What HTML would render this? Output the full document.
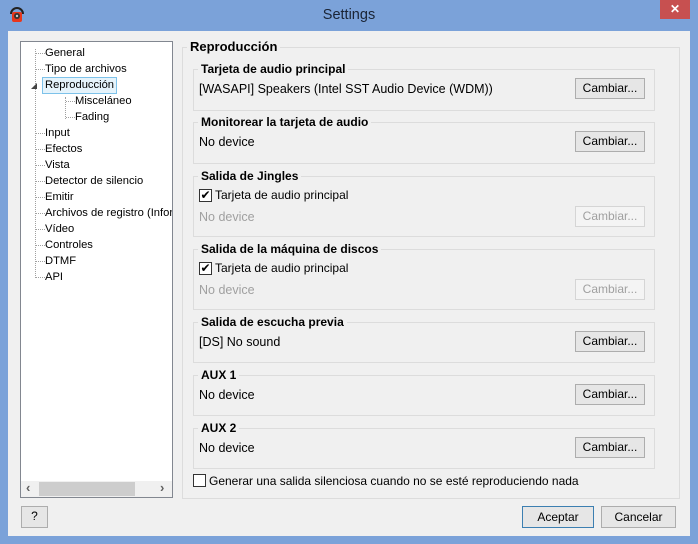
<!DOCTYPE html>
<html><head><meta charset="utf-8"><style>
*{box-sizing:border-box;margin:0;padding:0}
body{width:698px;height:544px;background:#7ba2d9;font-family:"Liberation Sans",Arial,sans-serif;font-size:12px;color:#000;position:relative;overflow:hidden}
.a{position:absolute}
.title{left:0;top:7px;width:698px;text-align:center;font-size:14.5px;color:#1a2435}
.close{left:660px;top:0px;width:30px;height:19px;background:#c75050;color:#fff;text-align:center;font-size:12px;line-height:19px;font-weight:bold}
.client{left:8px;top:31px;width:682px;height:505px;background:#f0f0f0}
.tree{left:20px;top:41px;width:153px;height:457px;background:#fff;border:1px solid #828790;font-size:11.2px}
.ti{position:absolute;white-space:nowrap;line-height:14px}
.hd{position:absolute;border-top:1px dotted #a0a0a0;width:9px}
.grp{position:absolute;border:1px solid #dcdcdc}
.gt{position:absolute;background:#f0f0f0;font-weight:bold;padding:0 3px;line-height:14px}
.btn{position:absolute;width:70px;height:21px;border:1px solid #adadad;background:#e6e6e6;text-align:center;line-height:19px}
.dis{color:#a0a0a0;border-color:#d5d5d5;background:#f4f4f4}
.txt{position:absolute;white-space:nowrap;font-size:12.5px}
.cb{position:absolute;width:13px;height:13px;border:1px solid #333;background:#fff;font-size:12px;line-height:11px;text-align:center}
</style></head><body>
<div class="a" style="left:9px;top:5px;width:16px;height:18px;">
<svg width="16" height="18"><path d="M2 9 A6 6 0 0 1 14 9" stroke="#222" stroke-width="2" fill="none"/><rect x="3" y="7" width="10" height="10" rx="2" fill="#e8361c"/><circle cx="8" cy="11" r="3" fill="#333"/><circle cx="8" cy="11" r="1.2" fill="#ccc"/></svg></div>
<div class="a title">Settings</div>
<div class="a close">✕</div>
<div class="a client"></div>
<div class="a tree">
<div class="a" style="left:14px;top:7px;height:229px;border-left:1px dotted #a0a0a0"></div>
<div class="a" style="left:44px;top:55px;height:22px;border-left:1px dotted #a0a0a0"></div>
<div class="hd" style="left:15px;top:11px"></div><div class="ti" style="left:24px;top:4px">General</div>
<div class="hd" style="left:15px;top:27px"></div><div class="ti" style="left:24px;top:20px">Tipo de archivos</div>
<div class="a" style="left:10px;top:41px;width:0;height:0;border-left:6px solid transparent;border-bottom:6px solid #444"></div>
<div class="ti" style="left:21px;top:35px;border:1px solid #7dc2ea;background:#e5f3fb;padding:0 2px;height:17px;line-height:15px">Reproducción</div>
<div class="hd" style="left:45px;top:59px"></div><div class="ti" style="left:54px;top:52px">Misceláneo</div>
<div class="hd" style="left:45px;top:75px"></div><div class="ti" style="left:54px;top:68px">Fading</div>
<div class="hd" style="left:15px;top:91px"></div><div class="ti" style="left:24px;top:84px">Input</div>
<div class="hd" style="left:15px;top:107px"></div><div class="ti" style="left:24px;top:100px">Efectos</div>
<div class="hd" style="left:15px;top:123px"></div><div class="ti" style="left:24px;top:116px">Vista</div>
<div class="hd" style="left:15px;top:139px"></div><div class="ti" style="left:24px;top:132px">Detector de silencio</div>
<div class="hd" style="left:15px;top:155px"></div><div class="ti" style="left:24px;top:148px">Emitir</div>
<div class="hd" style="left:15px;top:171px"></div><div class="ti" style="left:24px;top:164px;width:127px;overflow:hidden">Archivos de registro (Informes)</div>
<div class="hd" style="left:15px;top:187px"></div><div class="ti" style="left:24px;top:180px">Vídeo</div>
<div class="hd" style="left:15px;top:203px"></div><div class="ti" style="left:24px;top:196px">Controles</div>
<div class="hd" style="left:15px;top:219px"></div><div class="ti" style="left:24px;top:212px">DTMF</div>
<div class="hd" style="left:15px;top:235px"></div><div class="ti" style="left:24px;top:228px">API</div>
<div class="a" style="left:0;top:439px;width:151px;height:16px;background:#f0f0f0"></div>
<div class="a" style="left:18px;top:440px;width:96px;height:14px;background:#cdcdcd"></div>
<div class="a" style="left:5px;top:438px;color:#606060;font-weight:bold;font-size:13px">‹</div>
<div class="a" style="left:139px;top:438px;color:#606060;font-weight:bold;font-size:13px">›</div>
</div>

<div class="grp" style="left:182px;top:47px;width:498px;height:452px"></div>
<div class="gt" style="left:187px;top:40px;font-size:13px">Reproducción</div>

<div class="grp" style="left:193px;top:69px;width:462px;height:42px"></div>
<div class="gt" style="left:198px;top:62px">Tarjeta de audio principal</div>
<div class="txt" style="left:199px;top:82px">[WASAPI] Speakers (Intel SST Audio Device (WDM))</div>
<div class="btn" style="left:575px;top:78px">Cambiar...</div>

<div class="grp" style="left:193px;top:122px;width:462px;height:42px"></div>
<div class="gt" style="left:198px;top:115px">Monitorear la tarjeta de audio</div>
<div class="txt" style="left:199px;top:135px">No device</div>
<div class="btn" style="left:575px;top:131px">Cambiar...</div>

<div class="grp" style="left:193px;top:176px;width:462px;height:61px"></div>
<div class="gt" style="left:198px;top:169px">Salida de Jingles</div>
<div class="cb" style="left:199px;top:189px">✔</div><div class="txt" style="left:215px;top:188px;font-size:12px">Tarjeta de audio principal</div>
<div class="txt" style="left:199px;top:210px;color:#a0a0a0">No device</div>
<div class="btn dis" style="left:575px;top:206px">Cambiar...</div>

<div class="grp" style="left:193px;top:249px;width:462px;height:61px"></div>
<div class="gt" style="left:198px;top:242px">Salida de la máquina de discos</div>
<div class="cb" style="left:199px;top:262px">✔</div><div class="txt" style="left:215px;top:261px;font-size:12px">Tarjeta de audio principal</div>
<div class="txt" style="left:199px;top:283px;color:#a0a0a0">No device</div>
<div class="btn dis" style="left:575px;top:279px">Cambiar...</div>

<div class="grp" style="left:193px;top:322px;width:462px;height:41px"></div>
<div class="gt" style="left:198px;top:315px">Salida de escucha previa</div>
<div class="txt" style="left:199px;top:335px">[DS] No sound</div>
<div class="btn" style="left:575px;top:331px">Cambiar...</div>

<div class="grp" style="left:193px;top:375px;width:462px;height:41px"></div>
<div class="gt" style="left:198px;top:368px">AUX 1</div>
<div class="txt" style="left:199px;top:388px">No device</div>
<div class="btn" style="left:575px;top:384px">Cambiar...</div>

<div class="grp" style="left:193px;top:428px;width:462px;height:41px"></div>
<div class="gt" style="left:198px;top:421px">AUX 2</div>
<div class="txt" style="left:199px;top:441px">No device</div>
<div class="btn" style="left:575px;top:437px">Cambiar...</div>

<div class="cb" style="left:193px;top:474px"></div>
<div class="txt" style="left:209px;top:474px;font-size:12px">Generar una salida silenciosa cuando no se esté reproduciendo nada</div>

<div class="btn" style="left:21px;top:506px;width:27px;height:22px">?</div>
<div class="btn" style="left:522px;top:506px;width:72px;height:22px;border-color:#3c7fb1;line-height:20px">Aceptar</div>
<div class="btn" style="left:601px;top:506px;width:75px;height:22px;line-height:20px">Cancelar</div>
</body></html>
